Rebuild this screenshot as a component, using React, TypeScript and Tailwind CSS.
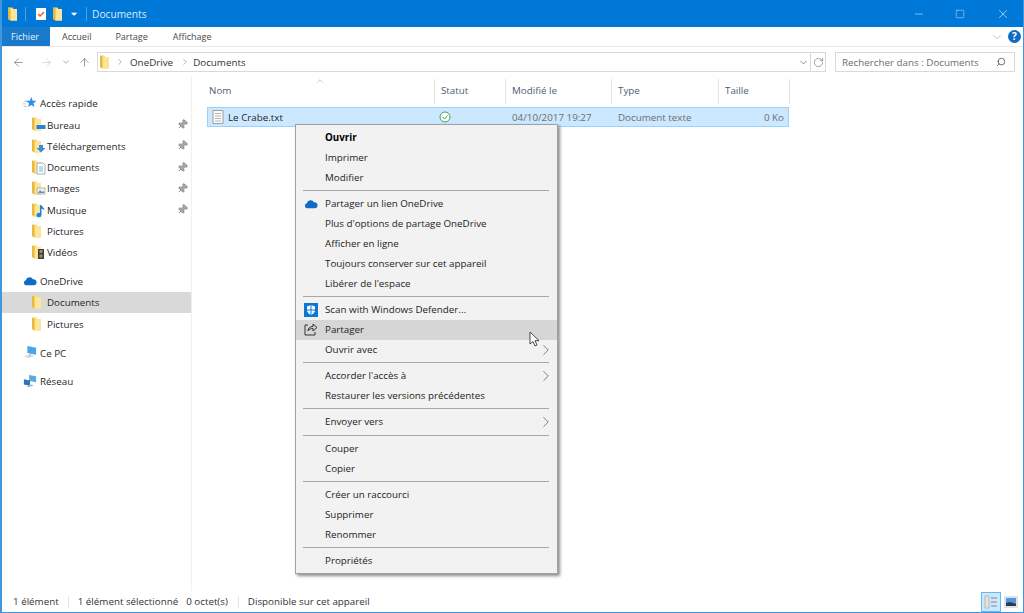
import { ArrowLeft, ArrowRight, ArrowUp, ChevronDown, ChevronRight, ChevronUp, Minus, Square, X, RotateCw, Search, Pin } from "lucide-react";
import type { ReactNode } from "react";

const Folder = ({ badge }: { badge?: ReactNode }) => (
  <svg width="16" height="16" viewBox="0 0 16 16" className="shrink-0">
    <path d="M1 1.5h4.5l1 1.5H10v11.5H3.5L1 13z" fill="#f7d774" />
    <path d="M3.5 3H10v11.5H3.5z" fill="#fce59b" />
    <path d="M1 1.5v11.5l2.5 1.5V3z" fill="#e8b93f" />
    {badge}
  </svg>
);

const badges: Record<string, ReactNode> = {
  desktop: <path d="M5.5 9h9v4h-9z" fill="#1c86d8" />,
  download: <path d="M8 7h4v3h2.5L10 14.5 5.5 10H8z" fill="#3a8fd9" />,
  doc: <g><path d="M6 4h6l2 2v9H6z" fill="#fff" stroke="#7b8ca0" strokeWidth=".7" /><path d="M8 8h4M8 10h4M8 12h4" stroke="#4f9fdc" strokeWidth=".8" /></g>,
  image: <g><path d="M6 8h8v6H6z" fill="#f2f2f2" stroke="#8a8a8a" strokeWidth=".6" /><path d="M7 13l2-3 2 2 2-1v2z" fill="#5a8fc4" /></g>,
  music: <path d="M9 3h1.5c.4 2 3 2.5 3 5.5-.7-1-1.800-1.500-3-1.700V13a2.500 2.200 0 1 1-1.500-2z" fill="#1c86d8" />,
  video: <g><path d="M7 5h6v10H7z" fill="#3d3d3d" /><path d="M8.500 6h3v3h-3zM8.500 10.500h3v3h-3z" fill="#a88b5c" /></g>,
};

const Star = () => (
  <svg width="14" height="14" viewBox="0 0 16 16" className="shrink-0">
    <path d="M9.500 1l1.600 4.300 4.400.2-3.500 2.800 1.200 4.400-3.700-2.500-3.700 2.500 1.200-4.400L3 5.500l4.900-.2z" fill="#2f8fe6" />
    <path d="M1 6h3M0 9h3M1 12h3" stroke="#8cc2ef" strokeWidth="1" />
  </svg>
);

const Cloud = () => (
  <svg width="14" height="10" viewBox="0 0 16 12" className="shrink-0">
    <path d="M3.500 11A3 3 0 0 1 3 5.100 4.500 4.500 0 0 1 11.500 4 3.600 3.600 0 0 1 15.800 8c0 1.800-1.300 3-3 3z" fill="#0f6cc4" />
  </svg>
);

const Pc = () => (
  <svg width="14" height="14" viewBox="0 0 16 16" className="shrink-0">
    <path d="M5 1l10 2v8L5 9z" fill="#4aa5e8" />
    <path d="M1 13l7-2.500 5 1.500-6 3z" fill="#d5d8dc" />
    <path d="M8 10v2" stroke="#9aa3ad" />
  </svg>
);

const Network = () => (
  <svg width="14" height="14" viewBox="0 0 16 16" className="shrink-0">
    <path d="M7 1l8 1.500v7L7 8z" fill="#5ea9e2" />
    <path d="M1 6l7 1.500v6L1 12z" fill="#2c73b8" />
    <path d="M4 14l6-2 2 1-6 2z" fill="#a8b1ba" />
  </svg>
);

const SideRow = ({ label, icon, pinned, active, indent }: { label: string; icon: ReactNode; pinned?: boolean; active?: boolean; indent?: boolean }) => (
  <div className={`h-[21.3px] flex items-center text-[#1f1f1f] ${indent ? "pl-[29px]" : "pl-[22px]"} pr-[2px] ${active ? "bg-[#d9d9d9]" : ""}`}>
    <div className={`w-4 flex ${indent ? "justify-center" : "justify-start -translate-x-px"}`}>{icon}</div>
    <span className="pt-[3px]">{label}</span>
    {pinned && <Pin size={11} className="ml-auto mr-[1px] text-[#8b8b8b] fill-[#a8a8a8] rotate-45" />}
  </div>
);

const Item = ({ label, bold, icon, sub, hover }: { label: string; bold?: boolean; icon?: ReactNode; sub?: boolean; hover?: boolean }) => (
  <div className={`h-5 flex items-center ${hover ? "bg-[#d6d6d6]" : ""}`}>
    <div className="w-[29px] flex justify-center shrink-0">{icon}</div>
    <span className={`pt-[2px] ${bold ? "font-bold text-black" : "text-[#1c1c1c]"}`}>{label}</span>
    {sub && <ChevronRight size={18} strokeWidth={0.9} className="ml-auto mr-[2px] text-[#444]" />}
  </div>
);

const Sep = () => <div className="h-[6px] flex items-center pl-[7px] pr-[8px]"><div className="h-px w-full bg-[#a8a8a8]" /></div>;

const HeadCell = ({ label, w }: { label: string; w: string }) => (
  <div className={`${w} h-[25px] flex items-center border-r border-[#e5e5e5] text-[#4c607a]`}>{label}</div>
);

export default function App() {
  return (
    <div className="relative w-[1024px] h-[613px] overflow-hidden bg-white flex flex-col border-l-2 border-b border-r border-[#3f97e0] font-['Open_Sans',sans-serif] text-[9.8px]">
      {/* title bar */}
      <div className="h-[27px] bg-[#0078d7] flex items-center shrink-0 -ml-[2px] -mr-px text-white">
        <div className="pl-[7px] flex items-center"><Folder /></div>
        <div className="w-px h-[14px] bg-[#4fa3e3] ml-[2px]" />
        <svg width="14" height="14" viewBox="0 0 14 14" className="ml-[8px]"><path d="M2 1h10v12H2z" fill="#fff" /><path d="M4 7l2 2 4-4" stroke="#d9662b" strokeWidth="1.500" fill="none" /></svg>
        <div className="ml-[4px]"><Folder /></div>
        <div className="ml-[3px] text-[8px]">⏷</div>
        <div className="w-px h-[14px] bg-[#4fa3e3] ml-[9px]" />
        <span className="ml-[5px] pt-[2px] text-[10.2px] text-[#dcecfa]">Documents</span>
        <div className="ml-auto flex items-center text-[#eaf4fc]">
          <Minus size={12} strokeWidth={1.1} className="mr-[30px]" />
          <Square size={10} strokeWidth={1.1} className="mr-[31px]" />
          <X size={14} strokeWidth={1.1} className="mr-[14px]" />
        </div>
      </div>
      {/* ribbon tabs */}
      <div className="h-[20px] flex items-center shrink-0 -ml-[2px] -mr-px border-b border-[#e8e8e8] text-[9px] text-[#4a4a4a]">
        <div className="w-[50px] h-full bg-[#1979ca] text-[#e6f1fa] flex items-center justify-center pt-[1px]">Fichier</div>
        <span className="ml-[12px] pt-[1px]">Accueil</span>
        <span className="ml-[24px] pt-[1px]">Partage</span>
        <span className="ml-[25px] pt-[1px]">Affichage</span>
        <ChevronDown size={14} strokeWidth={1} className="ml-auto mr-[4px] text-[#a0a0a0]" />
        <div className="w-[13px] h-[13px] mr-[3px] rounded-full bg-[#0f6cc4] text-white text-[10px] font-bold flex items-center justify-center">?</div>
      </div>
      {/* address row */}
      <div className="h-[30px] flex items-center shrink-0 text-[#333]">
        <ArrowLeft size={13} strokeWidth={1.2} className="ml-[10px] text-[#666]" />
        <ArrowRight size={13} strokeWidth={1.2} className="ml-[15px] text-[#c8c8c8]" />
        <ChevronDown size={10} strokeWidth={1.5} className="ml-[8px] text-[#777]" />
        <ArrowUp size={13} strokeWidth={1.2} className="ml-[7px] text-[#666]" />
        <div className="ml-[6px] w-[729px] h-[20px] border border-[#d9d9d9] flex items-center">
          <div className="ml-[1px]"><Folder /></div>
          <ChevronRight size={10} strokeWidth={1.2} className="text-[#666]" />
          <span className="ml-[5px] pt-[2px]">OneDrive</span>
          <ChevronRight size={10} strokeWidth={1.2} className="ml-[7px] text-[#666]" />
          <span className="ml-[3px] pt-[2px]">Documents</span>
          <ChevronDown size={11} strokeWidth={1.5} className="ml-auto mr-[1px] text-[#555]" />
          <div className="w-[15px] h-full border-l border-[#d9d9d9] flex items-center justify-center">
            <RotateCw size={11} strokeWidth={1.3} className="text-[#666]" />
          </div>
        </div>
        <div className="ml-[9px] w-[180px] h-[20px] border border-[#d9d9d9] flex items-center pl-[6px] text-[#6d6d6d]">
          <span className="pt-[2px]">Rechercher dans : Documents</span>
          <Search size={10} strokeWidth={2} className="ml-auto mr-[8px] -scale-x-100 text-[#555]" />
        </div>
      </div>
      {/* main */}
      <div className="flex-1 flex min-h-0">
        {/* sidebar */}
        <div className="w-[190px] border-r border-[#f0f0f0] pt-[15.5px] flex flex-col shrink-0">
          <SideRow label="Accès rapide" icon={<Star />} />
          {[["Bureau", "desktop"], ["Téléchargements", "download"], ["Documents", "doc"], ["Images", "image"], ["Musique", "music"]].map(([l, b]) => (
            <SideRow key={l} indent pinned label={l} icon={<Folder badge={badges[b]} />} />
          ))}
          <SideRow indent label="Pictures" icon={<Folder />} />
          <SideRow indent label="Vidéos" icon={<Folder badge={badges.video} />} />
          <div className="h-[7.5px]" />
          <SideRow label="OneDrive" icon={<Cloud />} />
          <SideRow indent active label="Documents" icon={<Folder />} />
          <SideRow indent label="Pictures" icon={<Folder />} />
          <div className="h-[7.5px]" />
          <SideRow label="Ce PC" icon={<Pc />} />
          <div className="h-[7px]" />
          <SideRow label="Réseau" icon={<Network />} />
        </div>
        {/* file list */}
        <div className="flex-1 pl-[14px] flex flex-col">
          <div className="relative flex h-[27px] pt-[2px] items-start">
            <HeadCell w="w-[229px] pl-[3px]" label="Nom" />
            <HeadCell w="w-[71px] pl-[6px]" label="Statut" />
            <HeadCell w="w-[106px] pl-[6px]" label="Modifié le" />
            <HeadCell w="w-[107px] pl-[6px]" label="Type" />
            <HeadCell w="w-[71px] pl-[6px]" label="Taille" />
            <ChevronUp size={10} strokeWidth={1} className="absolute left-[109px] top-[-1px] text-[#777]" />
          </div>
          <div className="mt-[3px] w-[582px] h-[20px] flex items-center bg-[#cce8ff] border border-[#99d1ff] ml-px">
            <svg width="14" height="16" viewBox="0 0 14 16" className="ml-[3px] shrink-0"><path d="M2 1.500h10v13H2z" fill="#fbfbfb" stroke="#8c8c8c" strokeWidth=".8" /><path d="M4 4.500h6M4 7h6M4 9.500h6M4 12h6" stroke="#9a9a9a" strokeWidth=".7" /></svg>
            <span className="ml-[3px] w-[208px] pt-[2px] text-[#1f1f1f]">Le Crabe.txt</span>
            <svg width="12" height="12" viewBox="0 0 12 12" className="ml-[3px] shrink-0"><circle cx="6" cy="6" r="5" fill="#fff" stroke="#3aa655" /><path d="M3.500 6l2 2 3-3.500" stroke="#3aa655" fill="none" /></svg>
            <span className="ml-[61px] w-[106px] pt-[2px] text-[#6d6d6d]">04/10/2017 19:27</span>
            <span className="w-[100px] pt-[2px] text-[#6d6d6d]">Document texte</span>
            <span className="ml-auto mr-[4px] pt-[2px] text-[#6d6d6d]">0 Ko</span>
          </div>
        </div>
      </div>
      {/* status bar */}
      <div className="h-[21px] flex items-center shrink-0 text-[#333]">
        <span className="ml-[11px] pt-[2px]">1 élément</span>
        <div className="w-px h-[12px] bg-[#e5e5e5] ml-[9px]" />
        <span className="ml-[9px] pt-[2px]">1 élément sélectionné</span>
        <span className="ml-[8px] pt-[2px]">0 octet(s)</span>
        <div className="w-px h-[12px] bg-[#e5e5e5] ml-[10px]" />
        <span className="ml-[9px] pt-[2px]">Disponible sur cet appareil</span>
        <div className="ml-auto w-[20px] h-[20px] bg-[#cce8ff] border border-[#66b8f0] flex items-center justify-center">
          <svg width="14" height="14" viewBox="0 0 14 14"><path d="M1 1h4v12H1z" fill="#e9e4d6" stroke="#9a9a9a" strokeWidth=".6" /><path d="M7 3h6M7 7h6M7 11h6" stroke="#7d8894" /></svg>
        </div>
        <div className="ml-[3px] mr-[5px] w-[14px] flex items-center justify-center">
          <svg width="14" height="12" viewBox="0 0 14 12"><path d="M0 0h14v12H0z" fill="#dfe3e7" /><path d="M2 2h10v8H2z" fill="#4f96da" /><path d="M2 7l4-1 6 2v2H2z" fill="#2d3a48" /></svg>
        </div>
      </div>
      {/* context menu */}
      <div className="absolute left-[293px] top-[124px] w-[263px] h-[450px] bg-[#f2f2f2] border border-[#a0a0a0] shadow-[2px_2px_3px_rgba(0,0,0,0.45)] pt-[2.5px]">
        <Item bold label="Ouvrir" />
        <Item label="Imprimer" />
        <Item label="Modifier" />
        <Sep />
        <Item label="Partager un lien OneDrive" icon={<Cloud />} />
        <Item label="Plus d'options de partage OneDrive" />
        <Item label="Afficher en ligne" />
        <Item label="Toujours conserver sur cet appareil" />
        <Item label="Libérer de l'espace" />
        <Sep />
        <Item label="Scan with Windows Defender..." icon={
          <svg width="14" height="14" viewBox="0 0 14 14"><path d="M0 0h14v14H0z" fill="#0a78d7" /><path d="M7 2l4 1.500V7c0 2.500-2 4-4 5-2-1-4-2.500-4-5V3.500z" fill="#fff" /><path d="M7 2v10M3 7h8" stroke="#0a78d7" /></svg>
        } />
        <Item hover label="Partager" icon={
          <svg width="14" height="13" viewBox="0 0 14 13" fill="none" stroke="#333"><path d="M4 2H1v10h10V9" /><path d="M4 8c0-3 2-4.500 5-4.500V1l4 3.500L9 8V5.500C7 5.500 5 6 4 8z" /></svg>
        } />
        <Item sub label="Ouvrir avec" />
        <Sep />
        <Item sub label="Accorder l'accès à" />
        <Item label="Restaurer les versions précédentes" />
        <Sep />
        <Item sub label="Envoyer vers" />
        <div className="h-[7px] flex items-center pl-[7px] pr-[8px]"><div className="h-px w-full bg-[#a8a8a8]" /></div>
        <Item label="Couper" />
        <Item label="Copier" />
        <Sep />
        <Item label="Créer un raccourci" />
        <Item label="Supprimer" />
        <Item label="Renommer" />
        <Sep />
        <Item label="Propriétés" />
      </div>
      {/* mouse pointer */}
      <svg width="11" height="16" viewBox="0 0 11 16" className="absolute left-[527px] top-[331px]"><path d="M1 1v12l3-2.500 2 4.500 2-1-2-4.300h4z" fill="#fff" stroke="#222" strokeWidth=".8" /></svg>
    </div>
  );
}
